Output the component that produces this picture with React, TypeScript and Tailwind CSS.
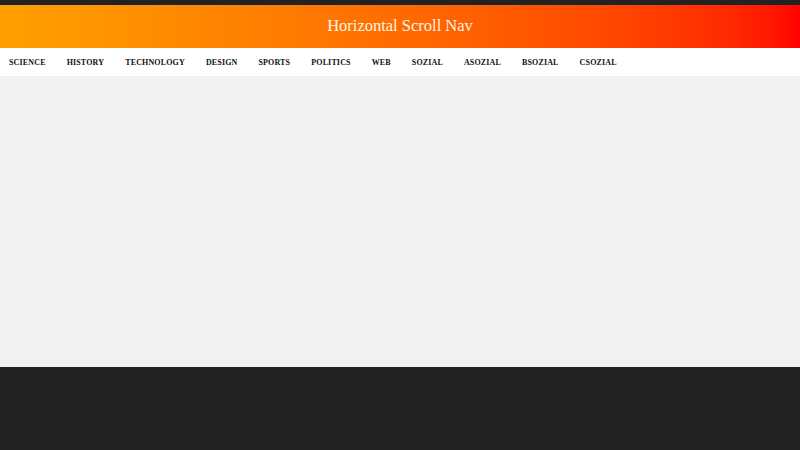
import React from "react";

const items = [
  "Science",
  "History",
  "Technology",
  "Design",
  "Sports",
  "Politics",
  "Web",
  "Sozial",
  "Asozial",
  "Bsozial",
  "Csozial",
];

export default function App() {
  return (
    <div
      className="flex h-[450px] w-full flex-col bg-[#222222]"
      style={{ fontFamily: '"Liberation Serif", "Times New Roman", serif' }}
    >
      <div className="h-[5px] bg-[#222222]" />
      <header className="flex h-[43px] items-center justify-center bg-gradient-to-r from-[#ffa000] to-[#ff0000]">
        <h1 className="text-[16.5px] font-normal leading-none text-[#fff4e6]">Horizontal Scroll Nav</h1>
      </header>
      <nav className="flex h-[28px] items-center gap-[21px] overflow-x-auto whitespace-nowrap bg-white px-[9px] pt-[1px]">
        {items.map((item) => (
          <a
            key={item}
            href="#"
            className="text-[8px] font-bold uppercase leading-none tracking-[0.15px] text-[#111111]"
          >
            {item}
          </a>
        ))}
      </nav>
      <main className="h-[291px] bg-[#f2f2f2]" />
      <footer className="flex-1 bg-[#222222]" />
    </div>
  );
}
